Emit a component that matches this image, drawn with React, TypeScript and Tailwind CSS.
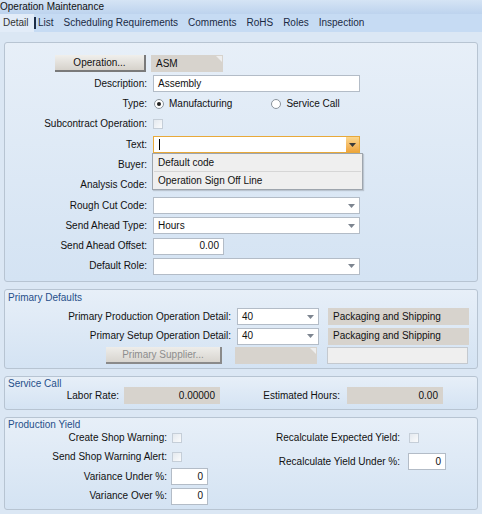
import React from "react";

const Arrow = ({ dark }: { dark?: boolean }) => (
	<svg width="7" height="4" viewBox="0 0 7 4" className="shrink-0">
		<path d="M0 0h7L3.5 4z" fill={dark ? "#3a3a3a" : "#7d8590"} />
	</svg>
);

type FieldProps = {
	w: string;
	value?: string;
	right?: boolean;
	gray?: boolean;
	arrow?: boolean;
	corner?: boolean;
	light?: boolean;
	caret?: boolean;
	hot?: boolean;
};

const Field = ({ w, value, right, gray, arrow, corner, light, caret, hot }: FieldProps) => {
	let bg = "bg-white border-[#b3bcc7]";
	if (gray) bg = "bg-[#d7d3cd] border-[#d7d3cd]";
	if (light) bg = "bg-[#efefef] border-[#c4c9cf]";
	return (
		<div className={`relative flex h-[17px] items-center border ${bg} ${w} ${hot ? "border-[#e8a93a]" : ""}`}>
			{caret && <div className="ml-[5px] h-[11px] w-px bg-black" />}
			<span className={`flex-1 truncate px-[4px] ${right ? "text-right" : ""}`}>{value}</span>
			{arrow && !hot && (
				<div className="mr-[4px] flex items-center">
					<Arrow />
				</div>
			)}
			{hot && (
				<div className="flex h-full w-[13px] items-center justify-center bg-gradient-to-b from-[#fbd78e] to-[#eea43a]">
					<Arrow dark />
				</div>
			)}
			{corner && (
				<div className="absolute right-0 top-0 h-0 w-0 border-l-[6px] border-t-[6px] border-l-transparent border-t-[#eeeeee]" />
			)}
		</div>
	);
};

const Check = () => (
	<div className="h-[10px] w-[10px] border border-[#c5ced8] bg-gradient-to-br from-[#e4e9ef] to-[#fafbfc]" />
);

const Radio = ({ on }: { on?: boolean }) => (
	<div className="flex h-[10px] w-[10px] items-center justify-center rounded-full border border-[#8a939c] bg-white">
		{on && <div className="h-[4px] w-[4px] rounded-full bg-[#222]" />}
	</div>
);

const Label = ({ w, children }: { w: string; children: React.ReactNode }) => (
	<div className={`${w} shrink-0 text-right`}>{children}</div>
);

const Panel = ({ h, children }: { h: string; children: React.ReactNode }) => (
	<div className={`mx-[4px] w-[474px] rounded-[3px] border border-[#b7c4d2] bg-gradient-to-b from-[#e7eff8] to-[#d4e3f3] ${h}`}>
		{children}
	</div>
);

const Title = ({ children, cls }: { children: React.ReactNode; cls: string }) => (
	<div className={`px-[3px] text-[#264f8a] ${cls}`}>{children}</div>
);

const App = () => {
	const tabs = ["List", "Scheduling Requirements", "Comments", "RoHS", "Roles", "Inspection"];
	return (
		<div className="h-[514px] w-[482px] overflow-hidden bg-[#dbe7f4] font-['Liberation_Sans',Arial,sans-serif] text-[10px] leading-[12px] text-[#111]">
			<div className="h-[14px] bg-gradient-to-b from-[#d5e4f5] to-[#bdd3ee] text-[10px] leading-[14px]">
				Operation Maintenance
			</div>
			<div className="flex h-[18px] items-stretch bg-[#c6dbf3] text-[10px] text-[#1a2a44]">
				<div className="flex w-[34px] items-center bg-[#e2ecf8] pl-[3px] text-[#333]">Detail</div>
				<div className="my-[3px] w-[2px] bg-[#1b2c47]" />
				<div className="flex items-center gap-[10px] pl-[2px]">
					{tabs.map((t) => (
						<span key={t}>{t}</span>
					))}
				</div>
			</div>

			<div className="h-[10px]" />
			<Panel h="h-[240px]">
				<div className="relative flex flex-col gap-[3.3px] pt-[12px]">
					<div className="flex h-[17px] items-center gap-[5px]">
						<div className="ml-[50px] flex h-[17px] w-[91px] items-center justify-center border-b-2 border-r-2 border-b-[#7a7a7a] border-r-[#7a7a7a] bg-gradient-to-b from-[#f0efec] to-[#d6d2cb]">
							Operation...
						</div>
						<Field w="w-[72px]" value="ASM" gray corner />
					</div>
					<div className="flex h-[17px] items-center gap-[6px]">
						<Label w="w-[142px]">Description:</Label>
						<Field w="w-[207px]" value="Assembly" />
					</div>
					<div className="flex h-[17px] items-center gap-[6px]">
						<Label w="w-[142px]">Type:</Label>
						<div className="flex items-center gap-[5px] pl-[1px]">
							<Radio on />
							<span>Manufacturing</span>
						</div>
						<div className="ml-[33px] flex items-center gap-[5px]">
							<Radio />
							<span>Service Call</span>
						</div>
					</div>
					<div className="flex h-[17px] items-center gap-[6px]">
						<Label w="w-[142px]">Subcontract Operation:</Label>
						<Check />
					</div>
					<div className="flex h-[17px] items-center gap-[6px]">
						<Label w="w-[142px]">Text:</Label>
						<Field w="w-[207px]" caret hot />
					</div>
					<div className="flex h-[17px] items-center gap-[6px]">
						<Label w="w-[142px]">Buyer:</Label>
					</div>
					<div className="flex h-[17px] items-center gap-[6px]">
						<Label w="w-[142px]">Analysis Code:</Label>
					</div>
					<div className="flex h-[17px] items-center gap-[6px]">
						<Label w="w-[142px]">Rough Cut Code:</Label>
						<Field w="w-[207px]" arrow />
					</div>
					<div className="flex h-[17px] items-center gap-[6px]">
						<Label w="w-[142px]">Send Ahead Type:</Label>
						<Field w="w-[207px]" value="Hours" arrow />
					</div>
					<div className="flex h-[17px] items-center gap-[6px]">
						<Label w="w-[142px]">Send Ahead Offset:</Label>
						<Field w="w-[71px]" value="0.00" right />
					</div>
					<div className="flex h-[17px] items-center gap-[6px]">
						<Label w="w-[142px]">Default Role:</Label>
						<Field w="w-[207px]" arrow />
					</div>

					{/* open list of the Text combo */}
					<div className="absolute left-[147px] top-[110px] w-[211px] border border-[#9ea5ad] bg-[#efefef] shadow-[1px_1px_1px_rgba(0,0,0,0.15)]">
						<div className="flex h-[17px] items-center px-[5px]">Default code</div>
						<div className="mx-[1px] h-px bg-[#d6d6d6]" />
						<div className="flex h-[17px] items-center px-[5px]">Operation Sign Off Line</div>
					</div>
				</div>
			</Panel>

			<div className="h-[7px]" />
			<Panel h="h-[80px]">
				<Title cls="h-[18px] pt-[2px]">Primary Defaults</Title>
				<div className="flex flex-col gap-[2.5px]">
					<div className="flex h-[17px] items-center">
						<Label w="w-[226px]">Primary Production Operation Detail:</Label>
						<div className="ml-[6px]">
							<Field w="w-[82px]" value="40" arrow />
						</div>
						<div className="ml-[9px]">
							<Field w="w-[141px]" value="Packaging and Shipping" gray />
						</div>
					</div>
					<div className="flex h-[17px] items-center">
						<Label w="w-[226px]">Primary Setup Operation Detail:</Label>
						<div className="ml-[6px]">
							<Field w="w-[82px]" value="40" arrow />
						</div>
						<div className="ml-[9px]">
							<Field w="w-[141px]" value="Packaging and Shipping" gray />
						</div>
					</div>
					<div className="flex h-[17px] items-center">
						<div className="ml-[101px] flex h-[17px] w-[116px] items-center justify-center border-b-2 border-r-2 border-b-[#8a8a8a] border-r-[#8a8a8a] bg-gradient-to-b from-[#eeedea] to-[#d8d5cf] text-[#8d8d8d]">
							Primary Supplier...
						</div>
						<div className="ml-[13px]">
							<Field w="w-[82px]" gray corner />
						</div>
						<div className="ml-[10px]">
							<Field w="w-[141px]" light />
						</div>
					</div>
				</div>
			</Panel>

			<div className="h-[7px]" />
			<Panel h="h-[34px]">
				<Title cls="h-[10px] pt-[1px]">Service Call</Title>
				<div className="flex h-[17px] items-center">
					<Label w="w-[114px]">Labor Rate:</Label>
					<div className="ml-[5px]">
						<Field w="w-[96px]" value="0.00000" right gray />
					</div>
					<Label w="w-[120px]">Estimated Hours:</Label>
					<div className="ml-[7px]">
						<Field w="w-[96px]" value="0.00" right gray />
					</div>
				</div>
			</Panel>

			<div className="h-[7px]" />
			<Panel h="h-[93px]">
				<Title cls="h-[11px] pt-[1px]">Production Yield</Title>
				<div className="flex">
					<div className="flex flex-col gap-[2.5px]">
						<div className="flex h-[17px] items-center gap-[5px]">
							<Label w="w-[162px]">Create Shop Warning:</Label>
							<Check />
						</div>
						<div className="flex h-[17px] items-center gap-[5px]">
							<Label w="w-[162px]">Send Shop Warning Alert:</Label>
							<Check />
						</div>
						<div className="flex h-[17px] items-center gap-[4px]">
							<Label w="w-[162px]">Variance Under %:</Label>
							<Field w="w-[37px]" value="0" right />
						</div>
						<div className="flex h-[17px] items-center gap-[4px]">
							<Label w="w-[162px]">Variance Over %:</Label>
							<Field w="w-[37px]" value="0" right />
						</div>
					</div>
					<div className="flex flex-col gap-[7px]">
						<div className="flex h-[17px] items-center gap-[9px]">
							<Label w="w-[192px]">Recalculate Expected Yield:</Label>
							<Check />
						</div>
						<div className="flex h-[17px] items-center gap-[8px]">
							<Label w="w-[192px]">Recalculate Yield Under %:</Label>
							<Field w="w-[38px]" value="0" right />
						</div>
					</div>
				</div>
			</Panel>
		</div>
	);
};

export default App;
